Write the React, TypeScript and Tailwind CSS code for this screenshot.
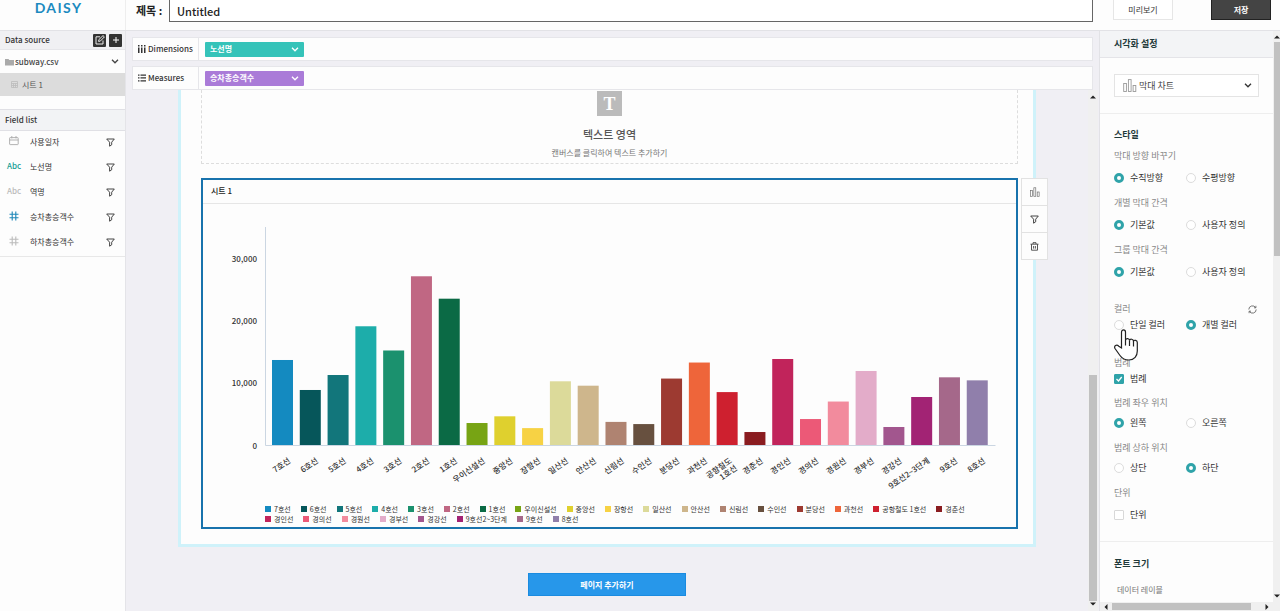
import { ReactNode } from "react";
import { clsx } from "clsx";

type Line = {
  name: string;
  value: number;
  color: string;
  label?: string[];
};

const lines: Line[] = [
  { name: "7호선", value: 13770, color: "#148ac0" },
  { name: "6호선", value: 8940, color: "#06565a" },
  { name: "5호선", value: 11350, color: "#12767b" },
  { name: "4호선", value: 19200, color: "#1dadaa" },
  { name: "3호선", value: 15300, color: "#1b916e" },
  { name: "2호선", value: 27250, color: "#c06783" },
  { name: "1호선", value: 23640, color: "#0b6a45" },
  { name: "우이신설선", value: 3620, color: "#77a414" },
  { name: "중앙선", value: 4700, color: "#dfd02e" },
  { name: "장항선", value: 2800, color: "#f7d244" },
  { name: "일산선", value: 10340, color: "#dcda9a" },
  { name: "안산선", value: 9630, color: "#ceb68c" },
  { name: "신림선", value: 3800, color: "#af8371" },
  { name: "수인선", value: 3450, color: "#67503f" },
  { name: "분당선", value: 10780, color: "#9d3a31" },
  { name: "과천선", value: 13360, color: "#ee653a" },
  {
    name: "공항철도 1호선",
    value: 8600,
    color: "#ce202f",
    label: ["공항철도", "1호선"],
  },
  { name: "경춘선", value: 2170, color: "#8a1c20" },
  { name: "경인선", value: 13930, color: "#c1245b" },
  { name: "경의선", value: 4260, color: "#ec5977" },
  { name: "경원선", value: 7080, color: "#f28b9d" },
  { name: "경부선", value: 12000, color: "#e3acc9" },
  { name: "경강선", value: 2980, color: "#a2568e" },
  { name: "9호선2~3단계", value: 7810, color: "#a22374" },
  { name: "9호선", value: 10980, color: "#a5688a" },
  { name: "8호선", value: 10490, color: "#907fab" },
];

type Field = {
  name: string;
  kind: "date" | "text" | "number";
  active?: boolean;
};

const fields: Field[] = [
  { name: "사용일자", kind: "date" },
  { name: "노선명", kind: "text", active: true },
  { name: "역명", kind: "text" },
  { name: "승차총승객수", kind: "number", active: true },
  { name: "하차총승객수", kind: "number" },
];

const FunnelIcon = () => (
  <svg className="size-[9px]" viewBox="0 0 9 9" fill="none" stroke="#444" aria-hidden="true">
    <path d="M.7 1h7.6L5.7 4.2v2.6L3.6 8.2v-4L.7 1z" strokeWidth="1" />
  </svg>
);

const ChevronIcon = ({ className }: { className?: string }) => (
  <svg className={className} viewBox="0 0 8 5" fill="none" stroke="currentColor" strokeWidth="1.3" aria-hidden="true">
    <path d="M1 .8l3 3 3-3" />
  </svg>
);

const BarsIcon = ({ className }: { className?: string }) => (
  <svg className={className} viewBox="0 0 14 13" fill="none" stroke="currentColor" strokeWidth=".9" aria-hidden="true">
    <rect x=".7" y="4.5" width="2.7" height="8" />
    <rect x="5.4" y=".6" width="2.7" height="11.9" />
    <rect x="10.1" y="6.5" width="2.7" height="6" />
  </svg>
);

const FieldIcon = ({ kind, active }: Field) => {
  if (kind === "text") {
    return (
      <span className={clsx("text-[8px] font-medium", active ? "text-[#17a096]" : "text-[#bbb]")}>
        Abc
      </span>
    );
  }
  if (kind === "date") {
    return (
      <svg className="h-2.5 w-2.5" viewBox="0 0 10 10" fill="none" stroke="#aaa" strokeWidth=".9" aria-hidden="true">
        <rect x=".6" y="1.6" width="8.6" height="7" rx=".6" />
        <path d="M.6 4h8.6M2.8 0v2.4M7 0v2.4" />
      </svg>
    );
  }
  return (
    <svg className="size-2.5" viewBox="0 0 10 10" stroke={active ? "#1d86b8" : "#bbb"} strokeWidth="1.1" aria-hidden="true">
      <path d="M3.2.5v9M6.8.5v9M.5 3.2h9M.5 6.8h9" />
    </svg>
  );
};

const Sidebar = () => (
  <aside className="flex w-[126px] shrink-0 flex-col border-r border-[#e4e4e8] bg-[#fdfdfd]">
    <div className="flex h-[19px] items-center border-b border-[#e6e6ea] bg-[#f0f0f3] pr-[3px] pl-[5px]">
      <h2 className="flex-1 text-[8px] leading-4 font-medium text-[#333]">Data source</h2>
      <div className="flex gap-[3px]">
        <button type="button" aria-label="Edit" className="flex size-[13px] items-center justify-center rounded-[1px] bg-[#333]">
          <svg className="size-2.5" viewBox="0 0 10 10" fill="none" stroke="#fff" strokeWidth=".9" aria-hidden="true">
            <path d="M5 1.8H1v7.2h7V5.5" />
            <path d="M3.6 6.4l.3-1.8L8 .6l1.4 1.3-4.1 4.2z" />
          </svg>
        </button>
        <button type="button" aria-label="Add" className="flex size-[13px] items-center justify-center rounded-[1px] bg-[#333]">
          <svg className="size-2" viewBox="0 0 8 8" stroke="#fff" aria-hidden="true">
            <path d="M4 1v6M1 4h6" />
          </svg>
        </button>
      </div>
    </div>
    <div className="flex h-[23px] items-center pr-1.5 pl-[5px] text-[#444]">
      <svg className="h-2 w-[9px]" viewBox="0 0 9 8" fill="#aaa" aria-hidden="true">
        <path d="M0 1h3.5l.8 1H9v5.5H0z" />
      </svg>
      <span className="flex-1 pl-px text-[8px] leading-4 font-medium">subway.csv</span>
      <ChevronIcon className="h-[5px] w-2" />
    </div>
    <div className="flex h-[23px] items-center gap-1 bg-[#dcdcdc] pl-[11px] text-[8px] text-[#555]">
      <svg className="size-[7px]" viewBox="0 0 7 7" fill="none" stroke="#bbb" strokeWidth=".8" aria-hidden="true">
        <path d="M.5.5h6v6h-6zM.5 2.5h6M.5 4.5h6M2.5 2.5v4M4.5 2.5v4" />
      </svg>
      시트 1
    </div>
    <h2 className="mt-[13px] h-[22px] border-y border-[#e0e0e5] bg-[#f2f3f5] pl-[5px] text-[8px] leading-5 font-medium text-[#333]">
      Field list
    </h2>
    <ul className="border-b border-[#e8e8e8]">
      {fields.map((field) => (
        <li key={field.name} className="flex h-[25px] items-center pr-2.5 pb-[3px] pl-1.5">
          <span className="flex w-4 justify-center pb-0.5">
            <FieldIcon {...field} />
          </span>
          <span className="flex-1 pl-2 text-[8px] text-[#333]">{field.name}</span>
          <button type="button" aria-label={`${field.name} filter`}>
            <FunnelIcon />
          </button>
        </li>
      ))}
    </ul>
  </aside>
);

type ShelfProps = {
  title: string;
  icon: ReactNode;
  value: string;
  pillClass: string;
};

const Shelf = ({ title, icon, value, pillClass }: ShelfProps) => (
  <div className="flex h-6 items-stretch border border-[#e6e6ea] bg-[#fdfdfd]">
    <div className="flex w-[66px] shrink-0 items-center gap-0.5 border-r border-[#e6e6ea] pl-[5px] text-[8px] font-medium text-[#333]">
      {icon}
      {title}
    </div>
    <div className="flex items-center pl-1.5">
      <button
        type="button"
        className={clsx(
          "flex h-[15px] w-[99px] items-center justify-between rounded-[1px] pr-[5px] pl-[5px] text-[8px] font-bold text-white",
          pillClass,
        )}
      >
        {value}
        <ChevronIcon className="h-[5px] w-2" />
      </button>
    </div>
  </div>
);

const STEP = 27.79;
const BASE = 241.5;
const toY = (value: number) => BASE - (value * 62.1) / 10000;

const BarChart = () => (
  <svg className="block w-full" viewBox="0 0 813 300" fontSize="8" fontWeight="500" fill="#333" role="img" aria-label="시트 1">
    {[0, 10000, 20000, 30000].map((tick) => (
      <text key={tick} x="54" y={toY(tick) + 3} textAnchor="end">
        {tick.toLocaleString("en-US")}
      </text>
    ))}
    {lines.map(({ name, value, color, label = [name] }, i) => (
      <g key={name}>
        <rect x={69 + i * STEP} y={toY(value)} width="21" height={BASE - toY(value)} fill={color} />
        <text
          transform={`translate(${(label.length > 1 ? 85 : 88) + i * STEP} 258) rotate(-35)`}
          textAnchor="end"
        >
          {label.map((part, row) => (
            <tspan key={part} x="0" y={row * 9}>
              {part}
            </tspan>
          ))}
        </text>
      </g>
    ))}
    <path d="M62.5 23v218.500h730" fill="none" stroke="#cbd6e2" />
  </svg>
);

const Legend = () => (
  <ul className="flex flex-wrap gap-x-2.5 pr-6 pl-[62px] text-[7px] leading-[10px] text-[#333]">
    {lines.map(({ name, color }) => (
      <li key={name} className="flex items-center gap-[3px]">
        <span className="size-1.5" style={{ backgroundColor: color }} />
        {name}
      </li>
    ))}
  </ul>
);

const Arrow = ({ d }: { d: string }) => (
  <svg className="size-1.5 shrink-0" viewBox="0 0 6 6" fill="#222" aria-hidden="true">
    <path d={d} />
  </svg>
);

const UP = "M0 4.500h6L3 1.500z";
const DOWN = "M0 1.500h6L3 4.500z";
const LEFT = "M4.500 0v6L1.500 3z";
const RIGHT = "M1.500 0v6L4.500 3z";

const Canvas = () => (
  <div className="flex min-h-0 flex-1">
    <div className="flex-1 overflow-hidden">
      <div className="mx-[52px] border-[3px] border-t-0 border-[#cff2fa] bg-[#fdfdfd] pr-[15px] pb-[15px] pl-5">
        <div className="flex h-[74px] flex-col items-center border border-t-0 border-dashed border-[#ddd]">
          <span className="mt-px flex size-[25px] items-center justify-center bg-[#bbb] font-['Liberation_Serif',serif] text-lg font-bold text-white">
            T
          </span>
          <p className="mt-2.5 text-[11px] leading-4 font-medium text-[#555]">텍스트 영역</p>
          <p className="mt-[3px] text-[8px] leading-4 text-[#777]">캔버스를 클릭하여 텍스트 추가하기</p>
        </div>
        <section className="relative mt-3.5 border-2 border-[#1873ad] pb-[3px]">
          <h3 className="h-6 border-b border-[#e6e6e6] pl-2 text-[8px] leading-[22px] font-medium text-[#222]">시트 1</h3>
          <BarChart />
          <Legend />
          <div className="absolute -top-0.5 -right-8 flex w-[27px] flex-col divide-y divide-[#e2e2e2] border border-[#e2e2e2] bg-[#fdfdfd]">
            <button type="button" aria-label="Chart" className="flex h-[27px] items-center justify-center text-[#666]">
              <BarsIcon className="size-2.5" />
            </button>
            <button type="button" aria-label="Filter" className="flex h-[27px] items-center justify-center">
              <FunnelIcon />
            </button>
            <button type="button" aria-label="Delete" className="flex h-[26px] items-center justify-center">
              <svg className="size-[9px]" viewBox="0 0 9 9" fill="none" stroke="#444" strokeWidth=".9" aria-hidden="true">
                <path d="M.5 2.200h8M3 2V.7h3V2M1.500 2.200v6h6v-6M3.600 4v2.600M5.400 4v2.600" />
              </svg>
            </button>
          </div>
        </section>
      </div>
      <button
        type="button"
        className="mx-auto mt-[26px] block h-[23px] w-[158px] border border-[#1a8be0] bg-[#2797ea] text-[8px] font-bold text-white"
      >
        페이지 추가하기
      </button>
    </div>
    <div className="mr-px flex w-2.5 flex-col items-center bg-[#f0f0f0] py-1">
      <Arrow d={UP} />
      <div className="flex-[274]" />
      <div className="w-2 flex-[226] bg-[#c1c1c1]" />
      <Arrow d={DOWN} />
    </div>
  </div>
);

type Option = { label: string; checked?: boolean };

const RadioRow = ({ name, options }: { name: string; options: Option[] }) => (
  <div className="flex h-4">
    {options.map(({ label, checked }) => (
      <label key={label} className="flex w-[72px] items-center gap-1.5 text-[9px] whitespace-nowrap text-[#333]">
        <input
          type="radio"
          name={name}
          defaultChecked={checked}
          className="size-2.5 shrink-0 appearance-none rounded-full border border-[#dcdcdc] bg-white checked:border-3 checked:border-[#2fa3a9]"
        />
        {label}
      </label>
    ))}
  </div>
);

const Check = ({ label, checked }: Option) => (
  <label className="flex h-4 items-center gap-1.5 text-[9px] text-[#333]">
    <span className="grid size-2.5">
      <input
        type="checkbox"
        defaultChecked={checked}
        className="peer size-2.5 appearance-none rounded-[1px] border border-[#d8d8d8] bg-white [grid-area:1/1] checked:border-[#2fa3a9] checked:bg-[#2fa3a9]"
      />
      <svg
        className="hidden size-2.5 [grid-area:1/1] peer-checked:block"
        viewBox="0 0 10 10"
        fill="none"
        stroke="#fff"
        strokeWidth="1.3"
        aria-hidden="true"
      >
        <path d="M2.500 5l2 2 3.200-4" />
      </svg>
    </span>
    {label}
  </label>
);

type GroupProps = {
  title: string;
  className?: string;
  children: ReactNode;
};

const Group = ({ title, className, children }: GroupProps) => (
  <fieldset className={clsx("relative flex flex-col", className)}>
    <legend className="text-[9px] leading-4 text-[#888]">{title}</legend>
    {children}
  </fieldset>
);

const HandCursor = () => (
  <svg className="absolute top-3 left-0 z-10 h-8 w-6" viewBox="0 0 24 32" fill="#fff" stroke="#222" strokeWidth="1.2" aria-hidden="true">
    <path d="M7.500 19V3.200c0-3 4-3 4 0V11c.6-2 3.800-1.800 4 .3.6-1.700 3.800-1.400 4 .7.8-1.300 3.800-.9 3.800 1.600V22c0 5-3 9-8.300 9-4.500 0-7-1.500-9-4.500L1 19.500c-1.300-2.500 1.500-4.500 3.800-2.300z" />
    <path d="M11.500 11v5.500M15.500 11.300V17M19.500 12v5.500" fill="none" />
  </svg>
);

const SettingsPanel = () => (
  <aside className="flex w-[181px] shrink-0 border-l border-[#e2e2e6] bg-[#fdfdfd]">
    <div className="flex min-w-0 flex-1 flex-col">
      <div className="min-h-0 flex-1 overflow-hidden">
        <h2 className="h-[27px] border-b border-[#e4e4e8] bg-[#f3f4f6] pl-3.5 text-[9px] leading-[25px] font-bold text-[#1f3a3a]">
          시각화 설정
        </h2>
        <div className="border-b border-[#eee] px-3.5 py-4">
          <div className="grid h-[23px] items-center border border-[#e4e4e4] bg-white">
            <select
              aria-label="차트 종류"
              className="h-full w-full appearance-none pl-6 text-[9px] text-[#444] [grid-area:1/1]"
            >
              <option>막대 차트</option>
            </select>
            <BarsIcon className="pointer-events-none ml-2 h-[13px] w-3.5 text-[#999] [grid-area:1/1]" />
            <ChevronIcon className="pointer-events-none mr-1.5 h-[5px] w-2 justify-self-end text-[#333] [grid-area:1/1]" />
          </div>
        </div>
        <div className="border-b border-[#eee] px-3.5 pt-[13px] pb-[18px]">
          <h3 className="text-[9px] leading-4 font-bold text-[#1f3a3a]">스타일</h3>
          <Group title="막대 방향 바꾸기" className="mt-[5px]">
            <div className="mt-1.5">
              <RadioRow name="direction" options={[{ label: "수직방향", checked: true }, { label: "수평방향" }]} />
            </div>
          </Group>
          <Group title="개별 막대 간격" className="mt-[9px]">
            <div className="mt-1.5">
              <RadioRow name="bar-gap" options={[{ label: "기본값", checked: true }, { label: "사용자 정의" }]} />
            </div>
          </Group>
          <Group title="그룹 막대 간격" className="mt-[9px]">
            <div className="mt-1.5">
              <RadioRow name="group-gap" options={[{ label: "기본값", checked: true }, { label: "사용자 정의" }]} />
            </div>
          </Group>
          <Group title="컬러" className="mt-[21px]">
            <RadioRow name="color" options={[{ label: "단일 컬러" }, { label: "개별 컬러", checked: true }]} />
            <button type="button" aria-label="컬러 초기화" className="absolute -top-3 right-0.5 flex">
              <svg className="size-[9px]" viewBox="0 0 9 9" fill="none" stroke="#666" strokeWidth=".9" aria-hidden="true">
                <path d="M.8 4.500A3.700 3.700 0 0 1 7.700 2.700M8.200 4.500A3.700 3.700 0 0 1 1.300 6.300M7.900.8v2H6M1.100 8.200v-2H3" />
              </svg>
            </button>
            <HandCursor />
          </Group>
          <Group title="범례" className="mt-[22px]">
            <Check label="범례" checked />
          </Group>
          <Group title="범례 좌우 위치" className="mt-2">
            <div className="mt-1">
              <RadioRow name="legend-x" options={[{ label: "왼쪽", checked: true }, { label: "오른쪽" }]} />
            </div>
          </Group>
          <Group title="범례 상하 위치" className="mt-[9px]">
            <div className="mt-1">
              <RadioRow name="legend-y" options={[{ label: "상단" }, { label: "하단", checked: true }]} />
            </div>
          </Group>
          <Group title="단위" className="mt-[9px]">
            <div className="mt-1.5">
              <Check label="단위" />
            </div>
          </Group>
        </div>
        <div className="px-3.5 pt-3.5">
          <h3 className="text-[9px] leading-4 font-bold text-[#1f3a3a]">폰트 크기</h3>
          <p className="mt-2.5 pl-[3px] text-[8px] leading-4 text-[#777]">데이터 레이블</p>
        </div>
      </div>
      <div className="flex h-[9px] shrink-0 items-center bg-[#f0f0f0] px-[3px]">
        <Arrow d={LEFT} />
        <div className="ml-[3px] h-[7px] flex-[141] bg-[#c1c1c1]" />
        <div className="flex-[13]" />
        <Arrow d={RIGHT} />
      </div>
    </div>
    <div className="flex w-[7px] shrink-0 flex-col items-center bg-[#f0f0f0] pt-[3px] pb-3">
      <Arrow d={UP} />
      <div className="mt-0.5 w-1.5 flex-[214] bg-[#c1c1c1]" />
      <div className="flex-[338]" />
      <Arrow d={DOWN} />
    </div>
  </aside>
);

const Header = () => (
  <header className="flex h-[31px] shrink-0 items-start border-b border-[#e2e2e6] bg-[#fdfdfd]">
    <div className="flex h-full w-[126px] shrink-0 items-start justify-center border-r border-[#eee] pr-2 font-[Lato,sans-serif] text-sm leading-4 font-bold tracking-widest text-[#1b8ac0]">
      DAISY
    </div>
    <label htmlFor="title" className="w-[43px] shrink-0 pl-2.5 text-[11px] leading-[21px] font-bold whitespace-nowrap text-[#222]">
      제목 :
    </label>
    <input
      id="title"
      defaultValue="Untitled"
      className="h-[22px] min-w-0 flex-1 border border-t-0 border-[#666] bg-white px-[7px] text-[11px] font-medium text-[#222]"
    />
    <div className="flex w-[187px] shrink-0 justify-between pr-[9px] pl-5">
      <button type="button" className="h-5 w-[60px] border border-t-0 border-[#e6e6e6] bg-white text-[8px] text-[#333]">
        미리보기
      </button>
      <button type="button" className="h-5 w-[60px] border border-t-0 border-[#222] bg-[#444] text-[8px] font-bold text-white">
        저장
      </button>
    </div>
  </header>
);

export default function App() {
  return (
    <div className="flex h-screen flex-col overflow-hidden bg-[#f0eff4] font-['Noto_Sans_CJK_KR',sans-serif]">
      <Header />
      <div className="flex min-h-0 flex-1">
        <Sidebar />
        <main className="flex min-w-0 flex-1 flex-col">
          <div className="flex flex-col gap-[5px] px-1.5 pt-1.5">
            <Shelf
              title="Dimensions"
              value="노선명"
              pillClass="bg-[#35c3b9]"
              icon={
                <svg className="size-2" viewBox="0 0 8 8" fill="#333" aria-hidden="true">
                  <path d="M0 0h1.500v1.500H0zM3 0h1.500v1.500H3zM6 0h1.500v1.500H6zM0 2.500h1.500V8H0zM3 2.500h1.500V8H3zM6 2.500h1.500V8H6z" />
                </svg>
              }
            />
            <Shelf
              title="Measures"
              value="승차총승객수"
              pillClass="bg-[#aa7bd8]"
              icon={
                <svg className="size-2" viewBox="0 0 8 8" fill="#333" aria-hidden="true">
                  <path d="M0 .5h1.500v1.300H0zM0 3.300h1.500v1.300H0zM0 6.200h1.500v1.300H0zM2.500.5H8v1.300H2.500zM2.500 3.300H8v1.300H2.500zM2.500 6.200H8v1.300H2.500z" />
                </svg>
              }
            />
          </div>
          <Canvas />
        </main>
        <SettingsPanel />
      </div>
    </div>
  );
}
